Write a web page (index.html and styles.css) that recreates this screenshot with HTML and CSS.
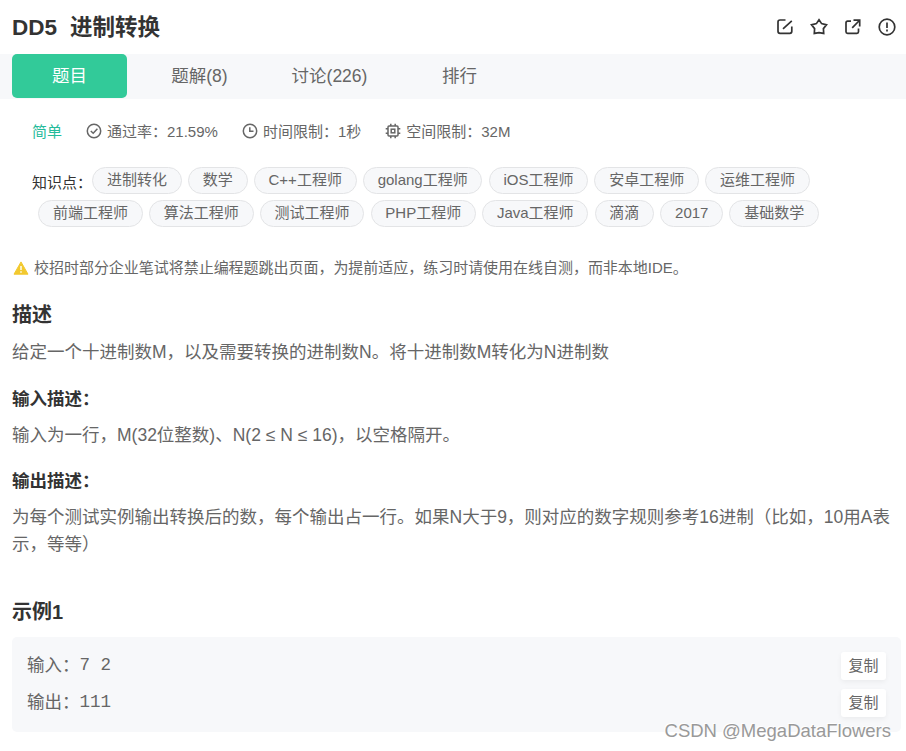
FILE: index.html
```html
<!DOCTYPE html>
<html lang="zh-CN">
<head>
  <meta charset="UTF-8">
  <meta name="viewport" content="width=device-width, initial-scale=1.0">
  <title>DD5 进制转换</title>
  <link rel="stylesheet" href="styles.css">
</head>
<body>
  <header class="header">
    <h1 class="title"><span>DD5</span><span>进制转换</span></h1>
    <div class="actions">
      <svg viewBox="0 0 18 18"><path d="M9.5 2H4Q2 2 2 4V13.3Q2 15.3 4 15.3H13.8Q15.8 15.3 15.8 13.3V8.5M7 10.8L15.8 2.8"/></svg>
      <svg viewBox="0 0 18 18"><path d="M9 1.7L11.6 5.6L16.5 6.8L13.4 10.6L13.7 15.4L9 14.6L4.3 15.4L4.6 10.6L1.5 6.8L6.4 5.6Z"/></svg>
      <svg viewBox="0 0 18 18"><path d="M7 3.2H3.6Q2 3.2 2 4.8V13.7Q2 15.3 3.6 15.3H12.9Q14.5 15.3 14.5 13.7V10.5M8.2 9.8L15.4 2.5M9.5 2.2H15.7V8.4"/></svg>
      <svg viewBox="0 0 18 18"><circle cx="9" cy="9" r="7.8"/><path d="M9 4.6V10M9 11.6V13.4"/></svg>
    </div>
  </header>

  <nav class="tabs">
    <a class="tab active">题目</a>
    <a class="tab">题解(8)</a>
    <a class="tab">讨论(226)</a>
    <a class="tab">排行</a>
  </nav>

  <div class="meta">
    <span class="level">简单</span>
    <span class="meta-item pass">
      <svg viewBox="0 0 16 16"><circle cx="8" cy="8" r="6.7"/><path d="M4.8 8L7.2 10.3L11.4 5.7"/></svg>
      通过率：21.59%
    </span>
    <span class="meta-item time">
      <svg viewBox="0 0 16 16"><circle cx="8" cy="8" r="6.7"/><path d="M7.8 4.3V8.3H11.5"/></svg>
      时间限制：1秒
    </span>
    <span class="meta-item">
      <svg viewBox="0 0 16 16"><rect x="3" y="3" width="10" height="10" rx="1"/><rect x="6.2" y="6.2" width="3.6" height="3.6"/><path d="M5.8 .7V3M10.2 .7V3M5.8 13V15.3M10.2 13V15.3M.7 5.8H3M.7 10.2H3M13 5.8H15.3M13 10.2H15.3"/></svg>
      空间限制：32M
    </span>
  </div>

  <div class="tags">
    <span class="tags-label">知识点：</span>
    <span class="tag">进制转化</span>
    <span class="tag">数学</span>
    <span class="tag">C++工程师</span>
    <span class="tag">golang工程师</span>
    <span class="tag">iOS工程师</span>
    <span class="tag">安卓工程师</span>
    <span class="tag">运维工程师</span>
    <span class="tag">前端工程师</span>
    <span class="tag">算法工程师</span>
    <span class="tag">测试工程师</span>
    <span class="tag">PHP工程师</span>
    <span class="tag">Java工程师</span>
    <span class="tag">滴滴</span>
    <span class="tag">2017</span>
    <span class="tag">基础数学</span>
  </div>

  <div class="notice">
    <svg viewBox="0 0 16 14"><path class="triangle" d="M8 .9L15 13.2H1Z"/><path class="mark" d="M8 5V9M8 10.3V11.7"/></svg>
    <span>校招时部分企业笔试将禁止编程题跳出页面，为提前适应，练习时请使用在线自测，而非本地IDE。</span>
  </div>

  <main class="content">
    <h2>描述</h2>
    <p>给定一个十进制数M，以及需要转换的进制数N。将十进制数M转化为N进制数</p>
    <h3>输入描述：</h3>
    <p>输入为一行，M(32位整数)、N(2 ≤ N ≤ 16)，以空格隔开。</p>
    <h3>输出描述：</h3>
    <p>为每个测试实例输出转换后的数，每个输出占一行。如果N大于9，则对应的数字规则参考16进制（比如，10用A表示，等等）</p>
    <h2 class="sample-title">示例1</h2>
    <div class="sample">
      <div class="sample-row">
        <span>输入：</span><code>7 2</code>
        <button class="copy">复制</button>
      </div>
      <div class="sample-row">
        <span>输出：</span><code>111</code>
        <button class="copy">复制</button>
      </div>
    </div>
  </main>

  <div class="watermark">CSDN @MegaDataFlowers</div>
</body>
</html>
```
FILE: styles.css
```css
* {
  box-sizing: border-box;
}

body {
  margin: 0;
  height: 751px;
  overflow: hidden;
  position: relative;
  background-color: #fff;
  color: #666;
  font-family: "Liberation Sans", "Noto Sans CJK SC", sans-serif;
  font-size: 17.5px;
}

svg {
  fill: none;
  stroke: currentColor;
  flex-shrink: 0;
}

.header {
  display: flex;
  justify-content: space-between;
  align-items: center;
  height: 54px;
  padding: 0 10.5px 0 12px;
  color: #333;
}

.title {
  display: flex;
  gap: 13px;
  margin: 0;
  padding-top: 2px;
  font-size: 22.5px;
  line-height: 30px;
}

.actions {
  display: flex;
  gap: 16px;
}

.actions svg {
  width: 18px;
  height: 18px;
  stroke-width: 1.7;
}

.tabs {
  display: flex;
  gap: 15px;
  height: 45px;
  padding-left: 12px;
  background-color: #f7f8fa;
}

.tab {
  width: 115px;
  height: 44px;
  line-height: 44px;
  text-align: center;
  border-radius: 5px;
}

.tab.active {
  background-color: #32ca99;
  color: #fff;
}

.meta {
  display: flex;
  align-items: center;
  height: 68px;
  padding: 0 0 2px 32px;
  font-size: 15px;
  line-height: 22px;
}

.level {
  width: 54px;
  color: #25bb9b;
}

.meta-item {
  display: flex;
  align-items: center;
  gap: 5px;
}

.meta-item svg {
  width: 16px;
  height: 16px;
  margin-top: -2px;
  stroke-width: 1.5;
}

.pass {
  margin-right: 24px;
}

.time {
  margin-right: 24px;
}

.tags {
  display: flex;
  flex-wrap: wrap;
  row-gap: 6px;
  padding: 0 12px 0 32px;
  font-size: 15px;
}

.tags-label {
  width: 54px;
  white-space: nowrap;
  line-height: 31px;
  height: 27px;
  color: #333;
}

.tag {
  height: 27px;
  line-height: 24px;
  margin-left: 6.25px;
  padding: 0 13.75px;
  border: 1px solid #e3e4e6;
  border-radius: 14px;
  background-color: #f7f8fa;
}

.notice {
  display: flex;
  align-items: center;
  gap: 5px;
  margin-top: 27px;
  height: 28px;
  padding-left: 13px;
  font-size: 15px;
  line-height: 24px;
}

.notice svg {
  width: 16px;
  height: 14px;
}

.notice span {
  padding-bottom: 1px;
  letter-spacing: -0.03px;
}

.notice .triangle {
  fill: #f2c92f;
  stroke: #f2c92f;
  stroke-linejoin: round;
}

.notice .mark {
  stroke: #fff;
  stroke-width: 1.4;
}

.content {
  padding: 19px 5px 0 12px;
}

.content h2,
.content h3 {
  margin: 0;
  line-height: 28px;
  color: #333;
}

.content h2 {
  font-size: 20px;
}

.content h3 {
  font-size: 17.5px;
}

.content p {
  margin: 10px 0 19px;
  line-height: 27px;
}

.content h3 + p {
  margin: 9px 0 18px;
}

.content .sample-title {
  margin-top: 40px;
}

.sample {
  margin-top: 11px;
  height: 95px;
  padding: 10px 15px;
  border-radius: 5px;
  background-color: #f7f8fa;
}

.sample-row {
  display: flex;
  align-items: center;
  height: 37px;
  line-height: 27px;
}

.sample-row code {
  font-family: "Liberation Mono", monospace;
  font-size: 17.5px;
}

.copy {
  width: 45px;
  height: 28px;
  margin-left: auto;
  padding: 0;
  border: none;
  border-radius: 3px;
  background-color: #fff;
  box-shadow: 0 2px 5px rgba(0, 0, 0, 0.05);
  color: #666;
  font-family: inherit;
  font-size: 15px;
  line-height: 28px;
}

.watermark {
  position: absolute;
  right: 15px;
  bottom: 8px;
  color: #999;
  font-size: 18.5px;
  line-height: 24px;
  text-shadow: -1px -1px 0 #fff;
}
```
